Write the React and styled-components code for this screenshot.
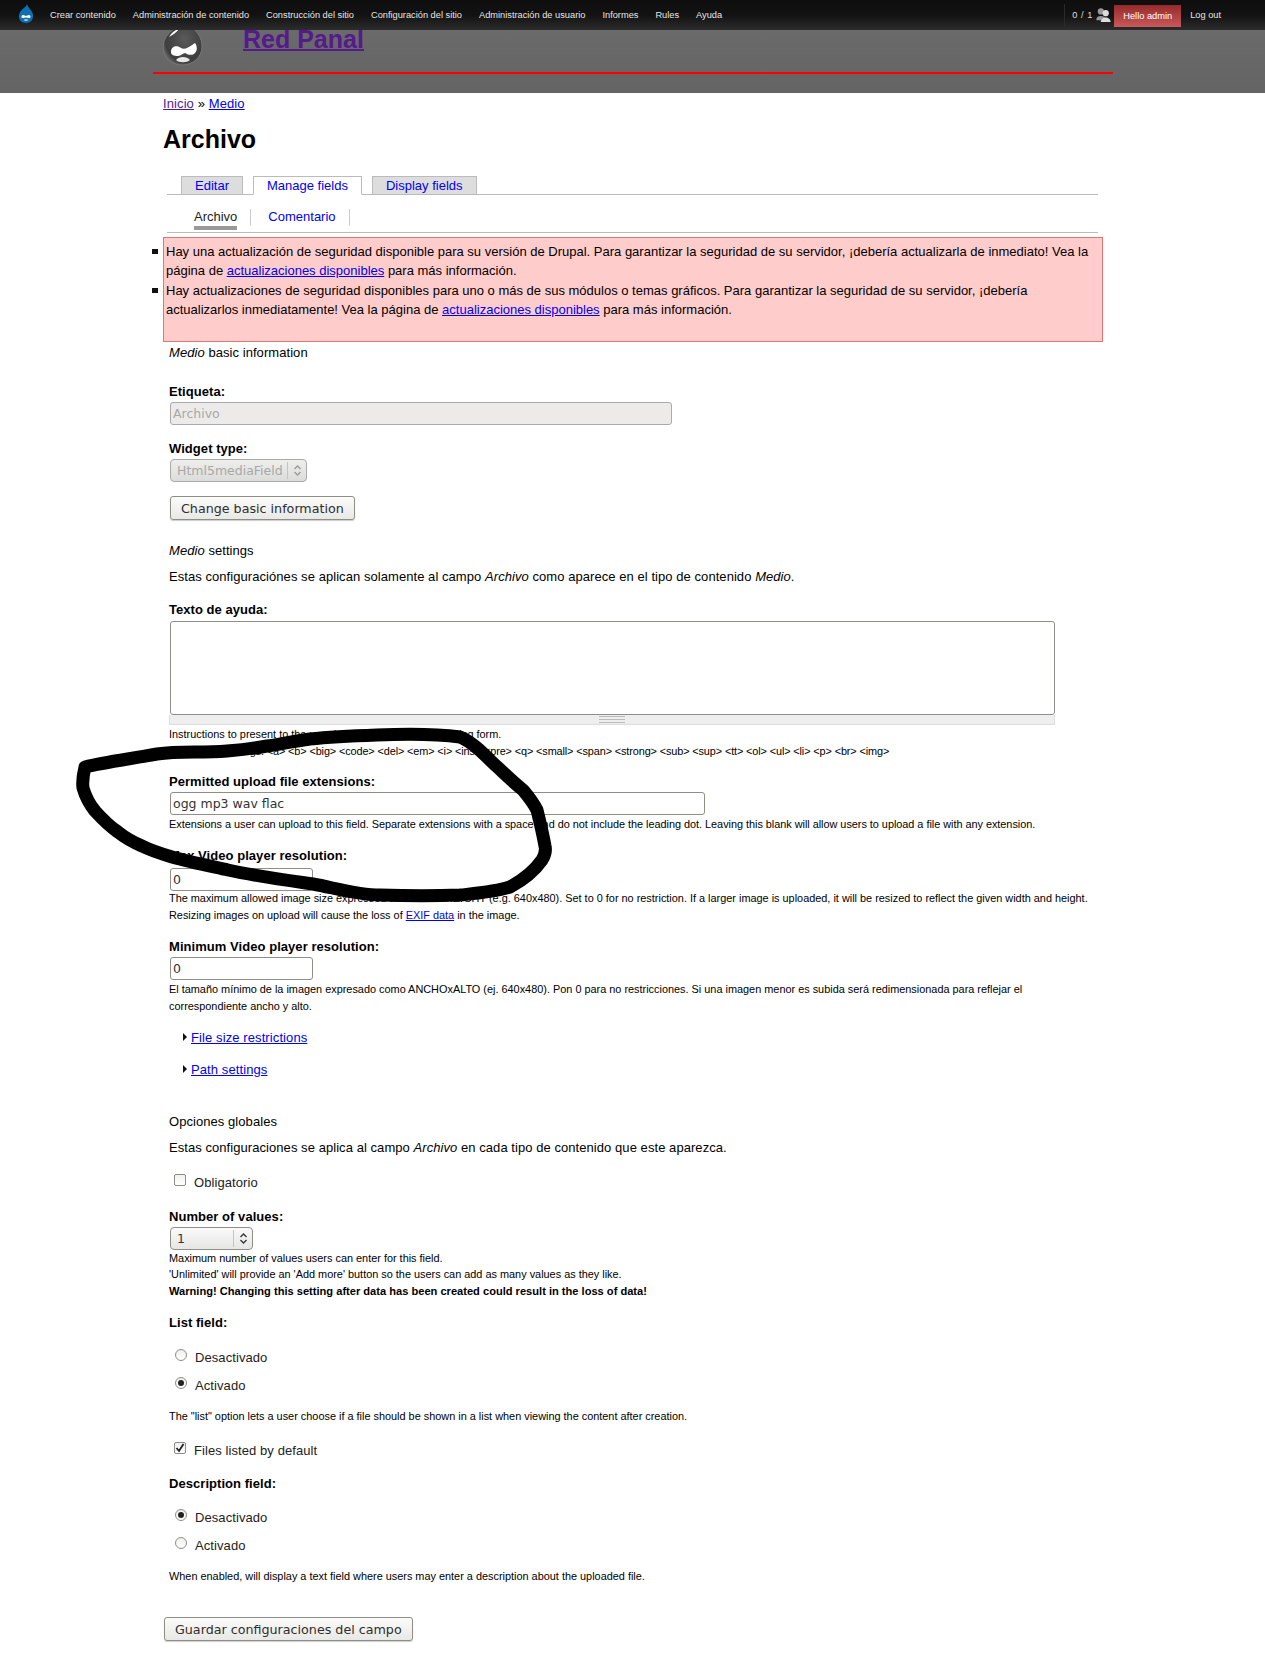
import React from 'react';
import styled, { createGlobalStyle } from 'styled-components';

const Global = createGlobalStyle`
  html, body { margin: 0; padding: 0; background: #fff; }
  body {
    font-family: "Liberation Sans", Arial, sans-serif;
    font-size: 13px;
    color: #000;
  }
  a { color: #0000ee; }
`;

const Page = styled.div`
  position: relative;
  width: 1265px;
  height: 1662px;
  overflow: hidden;
`;

const Toolbar = styled.div`
  position: relative;
  z-index: 1;
  box-sizing: border-box;
  display: flex;
  align-items: center;
  height: 30px;
  padding: 0 0 1px 18px;
  background: linear-gradient(#0e0e0e 0%, #121212 50%, #2c2c2c 100%);
  font-size: 9.25px;
`;

const ToolbarLink = styled.span`
  color: #e6e6e6;
  margin-right: ${(p) => p.$gap ?? 17}px;
`;

const ToolbarRight = styled.div`
  display: flex;
  align-items: center;
  margin-left: auto;
  margin-right: 44px;
  height: 100%;
`;

const Counter = styled.div`
  display: flex;
  align-items: center;
  gap: 4px;
  height: 22px;
  padding-left: 7px;
  border-left: 1px solid #2a2a2a;
  color: #ddd;
  word-spacing: 1px;
`;

const HelloButton = styled.div`
  display: flex;
  align-items: center;
  height: 22px;
  margin: 2px 9px 0 3px;
  padding: 0 9px;
  background: linear-gradient(#962a2a, #c9595b);
  color: #fff;
`;

const Header = styled.div`
  height: 63px;
  background: linear-gradient(#6a6a6a, #646464);
  padding: 0 152px 0 153px;
`;

const Brand = styled.div`
  display: flex;
  height: 42px;
  border-bottom: 2px solid #f00;
  padding-left: 9px;
`;

const SiteName = styled.a`
  display: block;
  height: 23px;
  margin: -4px 0 0 40px;
  font-size: 25px;
  font-weight: bold;
  line-height: 27px;
  color: #551a8b;
  text-decoration: none;
  border-bottom: 2px solid #551a8b;
`;

const Content = styled.div`
  padding-left: 163px;
  width: 940px;
`;

const Breadcrumb = styled.div`
  margin: 2px 0 0;
  line-height: 18px;
  letter-spacing: 0.1px;
  a:first-child { color: #551a8b; }
`;

const Title = styled.h1`
  margin: 11px 0 0;
  font-size: 25px;
  line-height: 30px;
  font-weight: bold;
`;

const Tabs = styled.div`
  display: flex;
  align-items: flex-end;
  height: 18px;
  margin: 22px 5px 0 4px;
  padding-left: 14px;
  border-bottom: 1px solid #bbb;
`;

const Tab = styled.a`
  display: flex;
  align-items: center;
  box-sizing: border-box;
  height: ${(p) => (p.$active ? 19 : 18)}px;
  margin-right: 10px;
  margin-bottom: ${(p) => (p.$active ? -1 : 0)}px;
  padding: 0 13px;
  border: 1px solid #bbb;
  border-bottom: ${(p) => (p.$active ? '1px solid #fff' : 'none')};
  background: ${(p) => (p.$active ? '#fff' : '#ddd')};
  font-size: 13px;
  text-decoration: none;
  color: #0000ee;
`;

const SubTabs = styled.div`
  display: flex;
  height: 38px;
  margin: 0 5px 0 4px;
  padding: 14px 0 0 27px;
  box-sizing: border-box;
  border-bottom: 1px solid #bbb;
`;

const SubTab = styled.a`
  display: block;
  height: 20px;
  margin-right: 13px;
  font-size: 13px;
  color: ${(p) => (p.$active ? '#222' : '#0000ee')};
  text-decoration: none;
  span {
    display: block;
    border-bottom: ${(p) => (p.$active ? '4px solid #999' : 'none')};
    height: 17px;
    line-height: 15px;
  }
`;

const SubDivider = styled.div`
  width: 1px;
  height: 17px;
  margin-right: 17px;
  background: #ccc;
`;

const Messages = styled.ul`
  box-sizing: border-box;
  height: 105px;
  margin: 4px 0 0;
  padding: 4px 2px;
  border: 1px solid #dd7777;
  background: #ffcccc;
  list-style: none;
`;

const Message = styled.li`
  position: relative;
  line-height: 19px;
  margin-bottom: 1px;
  &::before {
    content: "";
    position: absolute;
    left: -14px;
    top: 7px;
    width: 6px;
    height: 5px;
    background: #111;
  }
`;

const Form = styled.div`
  padding-left: 6px;
`;

const Para = styled.div`
  margin-top: ${(p) => p.$mt || 0}px;
  line-height: 18px;
  letter-spacing: 0.06px;
`;

const Label = styled.div`
  margin-top: ${(p) => p.$mt || 0}px;
  font-weight: bold;
  line-height: 16px;
  letter-spacing: 0.05px;
`;

const Help = styled.div`
  margin-top: ${(p) => p.$mt || 0}px;
  font-size: ${(p) => (p.$bold ? 11.1 : 10.9)}px;
  line-height: 16.5px;
  letter-spacing: ${(p) => p.$ls || 0}px;
  font-weight: ${(p) => (p.$bold ? 'bold' : 'normal')};
`;

const TextInput = styled.input`
  display: block;
  box-sizing: border-box;
  width: ${(p) => p.$w}px;
  height: 23px;
  margin: ${(p) => p.$mt ?? 3}px 0 0 1px;
  padding: 0 2px;
  border: 1px solid #8e8e86;
  border-radius: 3px;
  background: #fff;
  font-family: "DejaVu Sans", sans-serif;
  font-size: 12.5px;
  color: #333;
  outline: none;
  &:disabled {
    background: #ecebe9;
    border-color: #aaa;
    color: #a8a8a8;
  }
`;

const SelectBox = styled.div`
  display: flex;
  align-items: center;
  box-sizing: border-box;
  width: ${(p) => p.$w}px;
  height: 23px;
  margin: ${(p) => p.$mt ?? 3}px 0 0 1px;
  border: 1px solid ${(p) => (p.$off ? '#aaa' : '#8e8e86')};
  border-radius: 4px;
  background: linear-gradient(${(p) => (p.$off ? '#eeeeec, #dcdcda' : '#fafafa, #e6e6e4')});
  font-family: "DejaVu Sans", sans-serif;
  font-size: 12.5px;
  color: ${(p) => (p.$off ? '#a8a8a8' : '#333')};
`;

const SelectText = styled.span`
  flex: 1;
  padding-left: 6px;
  white-space: nowrap;
  overflow: hidden;
`;

const SelectArrows = styled.span`
  display: flex;
  align-items: center;
  justify-content: center;
  flex: none;
  width: 18px;
  height: 17px;
  border-left: 1px solid #c4c4c2;
`;

const Button = styled.button`
  display: block;
  box-sizing: border-box;
  height: 24px;
  margin: ${(p) => p.$mt || 0}px 0 0 ${(p) => p.$ml ?? 1}px;
  padding: 0 10px;
  border: 1px solid #8e8e86;
  border-radius: 3px;
  background: linear-gradient(#fbfbfa, #e8e8e6);
  box-shadow: 0 1px 1px #ccc;
  font-family: "DejaVu Sans", sans-serif;
  font-size: 12.7px;
  color: #2e2e2e;
`;

const TextArea = styled.div`
  box-sizing: border-box;
  width: 885px;
  height: 94px;
  margin: 3px 0 0 1px;
  border: 1px solid #8e8e86;
  border-radius: 3px;
  background: #fff;
`;

const Grippie = styled.div`
  display: flex;
  justify-content: center;
  align-items: center;
  box-sizing: border-box;
  width: 886px;
  height: 10px;
  background: #eee;
  border: 1px solid #ddd;
  border-top: none;
  &::after {
    content: "";
    width: 26px;
    height: 5px;
    border-top: 1px solid #bbb;
    border-bottom: 1px solid #bbb;
    background: linear-gradient(#eee 40%, #bbb 40%, #bbb 60%, #eee 60%);
  }
`;

const Collapsed = styled.div`
  display: flex;
  align-items: center;
  margin: ${(p) => p.$mt}px 0 0 14px;
  height: 18px;
  letter-spacing: 0.1px;
  &::before {
    content: "";
    margin: 0 4px 2px 0;
    border-left: 4px solid #111;
    border-top: 4px solid transparent;
    border-bottom: 4px solid transparent;
  }
`;

const Choice = styled.label`
  display: flex;
  align-items: center;
  height: 18px;
  margin-top: ${(p) => p.$mt || 0}px;
  letter-spacing: 0.08px;
  color: #222;
`;

const CheckMark = styled.span`
  display: flex;
  align-items: center;
  justify-content: center;
  box-sizing: border-box;
  width: 12px;
  height: 12px;
  margin: -5px 8px 0 5px;
  border: 1px solid #8e8e86;
  border-radius: 2px;
  background: linear-gradient(#f0f0ee, #fff);
`;

const RadioMark = styled.span`
  display: flex;
  align-items: center;
  justify-content: center;
  box-sizing: border-box;
  width: 12px;
  height: 12px;
  margin: -5px 8px 0 6px;
  border: 1px solid #8e8e86;
  border-radius: 50%;
  background: linear-gradient(#f0f0ee, #fff);
  &::after {
    content: "";
    display: ${(p) => (p.$on ? 'block' : 'none')};
    width: 6px;
    height: 6px;
    border-radius: 50%;
    background: #222;
  }
`;

const Scribble = styled.svg`
  position: absolute;
  left: 0;
  top: 0;
  pointer-events: none;
`;

const Arrows = ({ color }) => (
  <svg width="9" height="13" viewBox="0 0 9 13" fill="none" stroke={color} strokeWidth="1.3">
    <path d="M1.5 5 L4.5 2 L7.5 5" />
    <path d="M1.5 8 L4.5 11 L7.5 8" />
  </svg>
);

const SmallDrop = () => (
  <svg width="16" height="20" viewBox="0 0 16 20">
    <path d="M9 0 C9 3 2 5 1 11 C0 16 4 19 8 19 C12 19 15.500 16 15 11 C14.500 6 10 4 9 0 Z" fill="#0f6fb0" />
    <path d="M3.500 12 C5 10 7 12 8 12 C9 12 11 10 12.500 12 C13 15 10 14 8 13.500 C6 14 3 15 3.500 12 Z" fill="#fff" />
    <path d="M5.500 16 C7 15 9 15 10.500 16 C9 17 7 17 5.500 16 Z" fill="#dcecf7" />
  </svg>
);

const UsersIcon = () => (
  <svg width="15" height="16" viewBox="0 0 16 18">
    <circle cx="5" cy="5" r="3.500" fill="#999" />
    <path d="M0 14 C0 9 10 9 10 14 L10 15 L0 15 Z" fill="#999" />
    <circle cx="10.500" cy="7" r="3.500" fill="#ddd" />
    <path d="M5 17 C5 10 16 10 16 17 Z" fill="#ddd" />
  </svg>
);

const BigDrop = styled.svg`
  flex: none;
  margin-top: -12px;
`;

const Logo = () => (
  <BigDrop width="41" height="48" viewBox="0 0 41 48">
    <defs>
      <radialGradient id="dropShade" cx="0.55" cy="0.45" r="0.65">
        <stop offset="0" stopColor="#5a5a5a" />
        <stop offset="0.75" stopColor="#3d3d3d" />
        <stop offset="1" stopColor="#808080" />
      </radialGradient>
    </defs>
    <path d="M23 0 C22 6 1 13 1 29 C1 40 10 47 20.500 47 C31 47 40 40 40 28 C40 13 25 8 23 0 Z" fill="url(#dropShade)" stroke="#777" />
    <path d="M7 19 C9 15 13 12 18 10 C15 14 11 17 7 19 Z" fill="#fff" />
    <path d="M9 34 C9 28 15 27 19 30 C22 32 26 30 33 25 C36 29 35 34 32 36 C28 38 25 36 23 35 C21 35 19 38 16 38 C12 38 9 37 9 34 Z" fill="#fff" />
    <path d="M14 42 C17 38 25 38 28 42 C25 45 17 45 14 42 Z" fill="#e8e8e8" />
  </BigDrop>
);

const Tick = () => (
  <svg width="10" height="10" viewBox="0 0 10 10" fill="none" stroke="#222" strokeWidth="1.800">
    <path d="M1.500 5 L4 8 L8.500 1" />
  </svg>
);

const TOOL_LINKS = [
  'Crear contenido',
  'Administración de contenido',
  'Construcción del sitio',
  'Configuración del sitio',
  'Administración de usuario',
  'Informes',
  'Rules',
  'Ayuda',
];

export default function App() {
  return (
    <Page>
      <Global />
      <Toolbar>
        <ToolbarLink $gap={16}><SmallDrop /></ToolbarLink>
        {TOOL_LINKS.map((t) => <ToolbarLink key={t}>{t}</ToolbarLink>)}
        <ToolbarRight>
          <Counter>0 / 1 <UsersIcon /></Counter>
          <HelloButton>Hello admin</HelloButton>
          <ToolbarLink $gap={0}>Log out</ToolbarLink>
        </ToolbarRight>
      </Toolbar>
      <Header>
        <Brand>
          <Logo />
          <SiteName href="#">Red Panal</SiteName>
        </Brand>
      </Header>
      <Content>
        <Breadcrumb><a href="#">Inicio</a> » <a href="#">Medio</a></Breadcrumb>
        <Title>Archivo</Title>
        <Tabs>
          <Tab href="#">Editar</Tab>
          <Tab href="#" $active>Manage fields</Tab>
          <Tab href="#">Display fields</Tab>
        </Tabs>
        <SubTabs>
          <SubTab href="#" $active><span>Archivo</span></SubTab>
          <SubDivider />
          <SubTab href="#"><span>Comentario</span></SubTab>
          <SubDivider />
        </SubTabs>
        <Messages>
          <Message>Hay una actualización de seguridad disponible para su versión de Drupal. Para garantizar la seguridad de su servidor, ¡debería actualizarla de inmediato! Vea la<br />página de <a href="#">actualizaciones disponibles</a> para más información.</Message>
          <Message>Hay actualizaciones de seguridad disponibles para uno o más de sus módulos o temas gráficos. Para garantizar la seguridad de su servidor, ¡debería<br />actualizarlos inmediatamente! Vea la página de <a href="#">actualizaciones disponibles</a> para más información.</Message>
        </Messages>
        <Form>
          <Para $mt={2}><em>Medio</em> basic information</Para>
          <Label $mt={22}>Etiqueta:</Label>
          <TextInput $w={502} $mt={2} disabled value="Archivo" readOnly />
          <Label $mt={16}>Widget type:</Label>
          <SelectBox $w={137} $mt={2} $off>
            <SelectText>Html5mediaField</SelectText>
            <SelectArrows><Arrows color="#999" /></SelectArrows>
          </SelectBox>
          <Button $mt={14}>Change basic information</Button>
          <Para $mt={22}><em>Medio</em> settings</Para>
          <Para $mt={8}>Estas configuraciónes se aplican solamente al campo <em>Archivo</em> como aparece en el tipo de contenido <em>Medio</em>.</Para>
          <Label $mt={16}>Texto de ayuda:</Label>
          <TextArea />
          <Grippie />
          <Help $mt={1}>Instructions to present to the user below this field on the editing form.</Help>
          <Help $ls={-0.12}>Allowed HTML tags: &lt;a&gt; &lt;b&gt; &lt;big&gt; &lt;code&gt; &lt;del&gt; &lt;em&gt; &lt;i&gt; &lt;ins&gt; &lt;pre&gt; &lt;q&gt; &lt;small&gt; &lt;span&gt; &lt;strong&gt; &lt;sub&gt; &lt;sup&gt; &lt;tt&gt; &lt;ol&gt; &lt;ul&gt; &lt;li&gt; &lt;p&gt; &lt;br&gt; &lt;img&gt;</Help>
          <Label $mt={15}>Permitted upload file extensions:</Label>
          <TextInput $w={535} $mt={2} value="ogg mp3 wav flac" readOnly />
          <Help $mt={1} $ls={-0.03}>Extensions a user can upload to this field. Separate extensions with a space and do not include the leading dot. Leaving this blank will allow users to upload a file with any extension.</Help>
          <Label $mt={15}>Max Video player resolution:</Label>
          <TextInput $w={143} $mt={4} value="0" readOnly />
          <Help $mt={-1}>The maximum allowed image size expressed as WIDTHxHEIGHT (e.g. 640x480). Set to 0 for no restriction. If a larger image is uploaded, it will be resized to reflect the given width and height.</Help>
          <Help $mt={1}>Resizing images on upload will cause the loss of <a href="#">EXIF data</a> in the image.</Help>
          <Label $mt={15}>Minimum Video player resolution:</Label>
          <TextInput $w={143} $mt={2} value="0" readOnly />
          <Help $mt={1}>El tamaño mínimo de la imagen expresado como ANCHOxALTO (ej. 640x480). Pon 0 para no restricciones. Si una imagen menor es subida será redimensionada para reflejar el</Help>
          <Help $mt={1}>correspondiente ancho y alto.</Help>
          <Collapsed $mt={14}><a href="#">File size restrictions</a></Collapsed>
          <Collapsed $mt={14}><a href="#">Path settings</a></Collapsed>
          <Para $mt={34}>Opciones globales</Para>
          <Para $mt={8}>Estas configuraciones se aplica al campo <em>Archivo</em> en cada tipo de contenido que este aparezca.</Para>
          <Choice $mt={17}><CheckMark />Obligatorio</Choice>
          <Label $mt={17}>Number of values:</Label>
          <SelectBox $w={83} $mt={2}>
            <SelectText>1</SelectText>
            <SelectArrows><Arrows color="#333" /></SelectArrows>
          </SelectBox>
          <Help>Maximum number of values users can enter for this field.</Help>
          <Help>'Unlimited' will provide an 'Add more' button so the users can add as many values as they like.</Help>
          <Help $bold>Warning! Changing this setting after data has been created could result in the loss of data!</Help>
          <Label $mt={16}>List field:</Label>
          <Choice $mt={17}><RadioMark />Desactivado</Choice>
          <Choice $mt={10}><RadioMark $on />Activado</Choice>
          <Help $mt={14}>The "list" option lets a user choose if a file should be shown in a list when viewing the content after creation.</Help>
          <Choice $mt={17}><CheckMark><Tick /></CheckMark>Files listed by default</Choice>
          <Label $mt={16}>Description field:</Label>
          <Choice $mt={17}><RadioMark $on />Desactivado</Choice>
          <Choice $mt={10}><RadioMark />Activado</Choice>
          <Help $mt={13}>When enabled, will display a text field where users may enter a description about the uploaded file.</Help>
          <Button $mt={33} $ml={-5}>Guardar configuraciones del campo</Button>
        </Form>
      </Content>
      <Scribble width="1265" height="1662" viewBox="0 0 1265 1662" fill="none" stroke="#000" strokeWidth="13" strokeLinecap="round" strokeLinejoin="round">
        <path d="M460 737 C430 733 400 734 377 735 C350 736 330 737 310 739 C295 741 280 744 267 746 C250 749 240 750 227 751 C200 753 180 751 157 754 C130 759 105 762 85 767 C83 775 82 780 83 788 C86 798 90 805 95 811 C105 822 112 828 118 832 C128 840 135 843 142 846 C152 851 162 854 172 857 C190 862 210 866 228 870 C255 876 285 880 313 884 C335 888 358 895 380 895 C410 896 435 896 460 895 C480 893 495 892 510 887 C525 879 535 870 542 860 C545 855 546 850 545 846 C543 835 540 822 537 810 C533 802 528 796 523 790 C513 782 503 772 493 763 C482 752 472 742 460 737 Z" />
      </Scribble>
    </Page>
  );
}
